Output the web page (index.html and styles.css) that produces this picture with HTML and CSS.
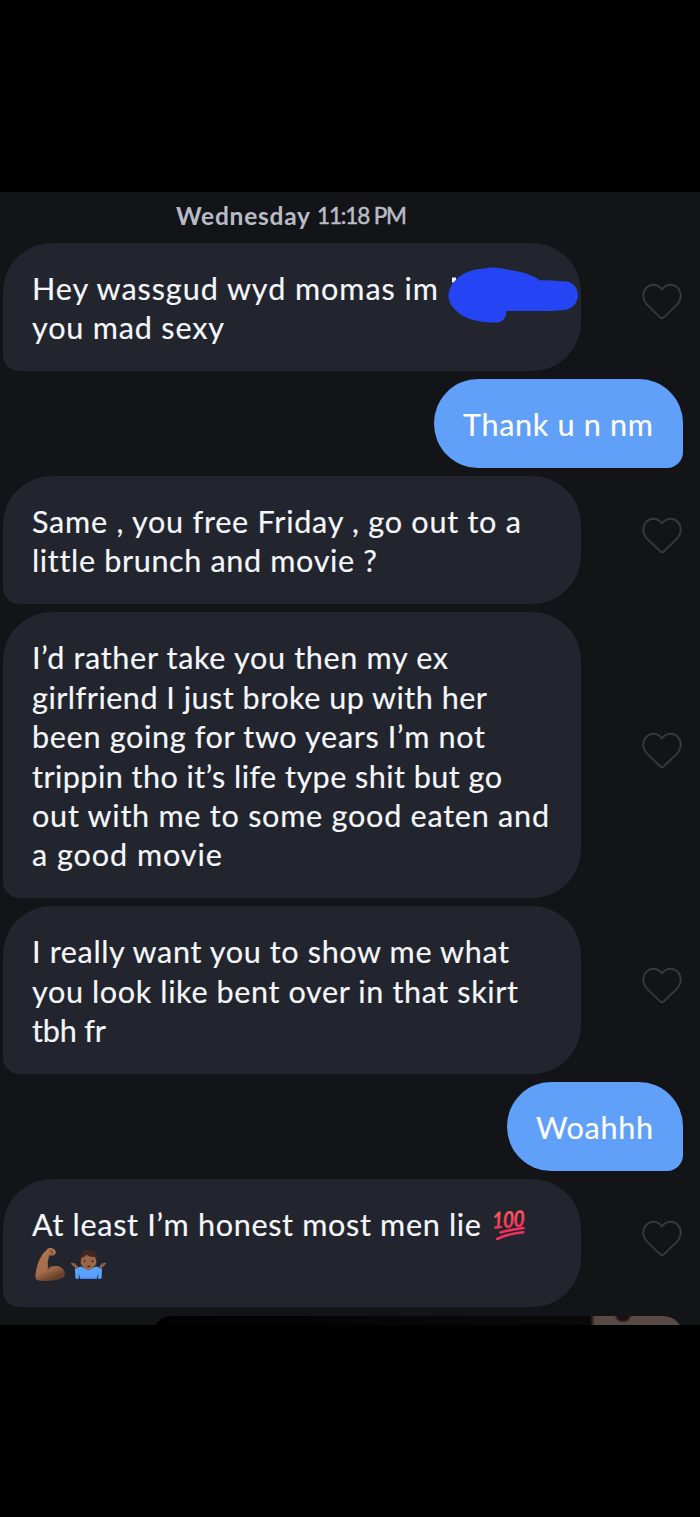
FILE: index.html
```html
<!DOCTYPE html>
<html lang="en">
<head>
<meta charset="utf-8">
<title>Messages</title>
<link rel="stylesheet" href="styles.css">
</head>
<body>
<svg class="defs" aria-hidden="true">
  <symbol id="heart" viewBox="0 0 42 40">
    <path d="M21 37.2C20.2 37.2 19.5 36.5 18.5 35.6L6 23.6C3 20.6 1.3 17.4 1.3 13.5C1.3 7 6 1.8 12 1.8C15.5 1.8 18.5 3.6 21 6.6C23.500 3.6 26.500 1.800 30 1.8C36 1.8 40.700 7 40.700 13.500C40.700 17.400 39 20.600 36 23.600L23.500 35.600C22.500 36.500 21.800 37.200 21 37.200Z"/>
  </symbol>
</svg>
<main class="chat">
  <div class="stamp"><b class="day fit" data-width="134">Wednesday</b><span class="time fit" data-width="90">11:18 PM</span></div>

  <div class="row">
    <div class="bubble in">
      <span class="line fit" data-width="406">Hey wassgud wyd momas im</span>
      <span class="line fit" data-width="192">you mad sexy</span>
      <svg class="scribble" viewBox="0 0 132 58"><path class="peek" d="M4 10.500h4v5H4z"/><path d="M0.500 28C2 14 15 4 31 2C37 1.500 41 0 46 0.500C53 1 58 2 64 3.500C74 4.500 84 8 92 13.500C102 12.500 112 14.500 119 14.500C126 16 130 22 130 28C130 36 124 42 116 43C102 44.500 80 44 58 44C59 50 55 55 50 55.500C38 56 24 54 15 49C6 43 0 36 0.500 28Z"/></svg>
    </div>
    <svg class="heart"><use href="#heart"/></svg>
  </div>

  <div class="row sent">
    <div class="bubble out"><span class="line fit" data-width="190">Thank u n nm</span></div>
  </div>

  <div class="row">
    <div class="bubble in">
      <span class="line fit" data-width="489">Same , you free Friday , go out to a</span>
      <span class="line fit" data-width="344">little brunch and movie ?</span>
    </div>
    <svg class="heart"><use href="#heart"/></svg>
  </div>

  <div class="row">
    <div class="bubble in">
      <span class="line fit" data-width="416">I’d rather take you then my ex</span>
      <span class="line fit" data-width="455">girlfriend I just broke up with her</span>
      <span class="line fit" data-width="453">been going for two years I’m not</span>
      <span class="line fit" data-width="470">trippin tho it’s life type shit but go</span>
      <span class="line fit" data-width="517">out with me to some good eaten and</span>
      <span class="line fit" data-width="190">a good movie</span>
    </div>
    <svg class="heart"><use href="#heart"/></svg>
  </div>

  <div class="row">
    <div class="bubble in">
      <span class="line fit" data-width="477">I really want you to show me what</span>
      <span class="line fit" data-width="486">you look like bent over in that skirt</span>
      <span class="line fit" data-width="74">tbh fr</span>
    </div>
    <svg class="heart"><use href="#heart"/></svg>
  </div>

  <div class="row sent">
    <div class="bubble out"><span class="line fit" data-width="117">Woahhh</span></div>
  </div>

  <div class="row">
    <div class="bubble in">
      <div class="mixed">
        <span class="line fit" data-width="449">At least I’m honest most men lie</span>
        <svg class="hundred" viewBox="0 0 34 34">
          <defs><linearGradient id="red" x1="0" y1="0" x2="0" y2="1"><stop offset="0" stop-color="#ff6a58"/><stop offset="1" stop-color="#e5245f"/></linearGradient></defs>
          <text class="score" transform="translate(0 21) rotate(-4) skewX(-8)" textLength="32" lengthAdjust="spacingAndGlyphs">100</text>
          <path class="stroke" d="M8.500 24.500Q19 21.500 31.500 20M5 31Q17 25.500 31.500 24.200"/>
        </svg>
      </div>
      <div class="mixed emojis">
        <svg class="arm" viewBox="0 0 32 36">
          <defs><linearGradient id="skin" x1="0" y1="0" x2="0.400" y2="1"><stop offset="0" stop-color="#b17854"/><stop offset="0.700" stop-color="#a46c49"/><stop offset="1" stop-color="#69412c"/></linearGradient></defs>
          <path fill="url(#skin)" d="M12 3C13 1 16 0.500 18 1.500C21 2 22 5 21 7C20 9 17 9.500 14.500 9L13 16L13.500 23C17 19 23 18.500 27 21C31 24 32 28 29.500 31C25 35 8 36 2 34C-0.500 32 0.500 27 1.500 23C3 16 6 8 12 3Z"/>
          <path fill="none" stroke="#704831" stroke-width="1.200" d="M15 4.500Q18 3.500 18 6M14 9Q17 9.500 18 6M13 23Q15 20 18 20"/>
        </svg>
        <svg class="shrug" viewBox="0 0 36 32">
          <path fill="#5aa2ff" d="M4 20L10 18Q18 22 26 18L32 20L31.500 30.500L28 31V25L26.500 31H9.500L8 25V31L4.500 30.500Z"/>
          <path fill="#4c7df0" d="M9.500 29.500H26.500V31H9.500Z"/>
          <path fill="none" stroke="#8d5d44" stroke-width="2" stroke-linecap="round" d="M1 15L5.500 19.500M3.500 15.500L6 18.500M35 15L30.500 19.500M32.500 15.500L30 18.500"/>
          <path fill="#9b6648" d="M10 8Q18 3 26 8V15Q23 21 18 22Q13 21 10 15Z"/>
          <path fill="#3f2924" d="M9.500 13Q8 4 14 2Q18 -0.500 23 2Q28 4 26.500 13L24.500 8Q20 9 16 6Q13 9 11 9Z"/>
          <path fill="none" stroke="#321d19" stroke-width="1.300" stroke-linecap="round" d="M14 12V13M22 12V13M17.500 18H19"/>
        </svg>
      </div>
    </div>
    <svg class="heart"><use href="#heart"/></svg>
  </div>

  <div class="photo"></div>
</main>
<script src="fit.js"></script>
</body>
</html>
```
FILE: styles.css
```css
* { box-sizing: border-box; }
body {
  margin: 0;
  height: 1517px;
  padding-top: 191.500px;
  background: #000;
  color: #f5f7fb;
  font-family: Lato, "Liberation Sans", sans-serif;
  overflow: hidden;
}
.defs { position: absolute; width: 0; height: 0; }
.chat {
  height: 1133.500px;
  background: #121418;
  display: flex;
  flex-direction: column;
  gap: 8.400px;
  overflow: hidden;
}
.stamp {
  flex: none;
  height: 42.700px;
  padding: 8.300px 0 0 176px;
  display: flex;
  gap: 7px;
  font-size: 24.500px;
  line-height: 32px;
  color: #b9bcc7;
  white-space: nowrap;
}
.day { width: 134px; font-weight: 700; }
.time { width: 90px; font-size: 22.500px; -webkit-text-stroke: 0.500px #b9bcc7; }
.row {
  flex: none;
  display: flex;
  justify-content: space-between;
  align-items: center;
  padding: 0 17px 0 3px;
}
.sent { justify-content: flex-end; }
.bubble {
  position: relative;
  padding: 26.100px 30px 23.100px 29px;
  font-size: 30.600px;
  line-height: 39.400px;
  -webkit-text-stroke: 0.150px currentColor;
}
.in {
  width: 578px;
  background: #23252e;
  border-radius: 49px 49px 49px 16px;
}
.out {
  background: #60a0f8;
  color: #fff;
  border-radius: 44.300px 44.300px 16px 44.300px;
}
.line { display: block; width: max-content; white-space: nowrap; }
.heart {
  width: 40px;
  height: 38px;
  margin: 0 1px 8.500px 0;
  fill: none;
  stroke: #373940;
  stroke-width: 2;
}
.heart { overflow: visible; }
.scribble {
  position: absolute;
  left: 444.500px;
  top: 24.800px;
  width: 132px;
  height: 58px;
  fill: #2545f5;
}
.peek { fill: #f5f7fb; }
.mixed { display: flex; height: 39.400px; gap: 11px; }
.hundred {
  width: 34px;
  height: 34px;
  margin-top: 2.300px;
  overflow: visible;
  -webkit-text-stroke: 0;
}
.score {
  font: 900 23px/1.300 Lato, sans-serif;
  fill: url(#red);
}
.stroke { fill: none; stroke: #ee315f; stroke-width: 2.600; stroke-linecap: round; }
.emojis { gap: 4.500px; padding: 2.700px 0 0 3.300px; }
.arm { width: 31px; height: 35px; }
.shrug { width: 35px; height: 31px; margin-top: 2px; }
.photo {
  flex: none;
  width: 531px;
  height: 60px;
  margin-left: 151.500px;
  border-radius: 20px;
  background:
    radial-gradient(ellipse 9px 7px at 471px 0, #1b1010 60%, transparent),
    linear-gradient(90deg, #020203 0, #0b0808 430px, #090606 438px, #594a46 443px);
}
```
FILE: fit.js
```js
// Tracks each line so that its text spans the width given in data-width.
document.querySelectorAll('.fit').forEach(function (el) {
  var range = document.createRange();
  range.selectNodeContents(el);
  var natural = range.getBoundingClientRect().width;
  var target = Number(el.dataset.width);
  var step = (target - natural) / (el.textContent.length - 1);
  el.style.letterSpacing = step.toFixed(3) + 'px';
  if (el.classList.contains('line')) {
    el.style.marginRight = (-step).toFixed(3) + 'px';
  }
});
```
